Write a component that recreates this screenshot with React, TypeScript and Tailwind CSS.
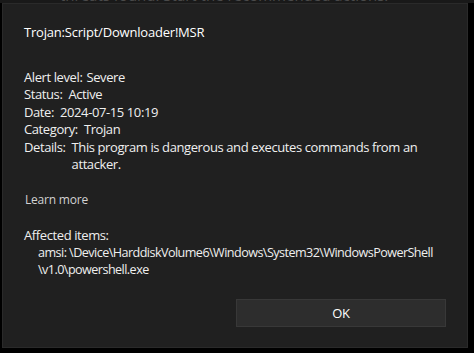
import React from "react";

const rows = [
  { label: "Alert level:", value: "Severe", gap: "ml-[4px]" },
  { label: "Status:", value: "Active", gap: "ml-[6px]" },
  { label: "Date:", value: "2024-07-15 10:19", gap: "ml-[6px]" },
  { label: "Category:", value: "Trojan", gap: "ml-[6px]" },
];

export default function App() {
  return (
    <div
      className="w-[474px] h-[353px] bg-black overflow-hidden text-[13px] text-[#efefef]"
      style={{ fontFamily: '"Open Sans", "Noto Sans", sans-serif' }}
    >
      {/* page behind the dialog, mostly hidden */}
      <div className="h-[3px] overflow-hidden bg-[#191919]">
        <div className="-mt-[13px] pl-[60px] text-[15px] leading-[16px] text-[#4a4a4a] whitespace-nowrap">
          threats found. Start the recommended actions.
        </div>
      </div>

      {/* dialog */}
      <div className="ml-[2px] w-[466px] h-[345px] bg-[#202020] border border-[#2a2a2a] flex flex-col pl-[21px] pr-[21px] pt-[19px] tracking-[-0.4px]">
        <div className="leading-[18px] text-white tracking-[-0.2px]">Trojan:Script/Downloader!MSR</div>

        <div className="mt-[28px] leading-[17.4px]">
          {rows.map((r) => (
            <div key={r.label} className="flex">
              <span>{r.label}</span>
              <span className={r.gap}>{r.value}</span>
            </div>
          ))}
          <div className="flex">
            <span className="shrink-0">Details:</span>
            <span className="ml-[6px] max-w-[365px]">
              This program is dangerous and executes commands from an attacker.
            </span>
          </div>
        </div>

        <div className="mt-[18px] ml-[1px] text-[12px] leading-[17px] text-[#d2d2d2] tracking-[-0.2px]">Learn more</div>

        <div className="mt-[19px] leading-[17px]">
          <div>Affected items:</div>
          <div className="pl-[14px] w-[430px] text-[12.6px] tracking-[-0.55px]">
            amsi: \Device\HarddiskVolume6\Windows\System32\WindowsPowerShell<wbr />\v1.0\powershell.exe
          </div>
        </div>

        <div className="flex justify-end mt-[21px]">
          <button className="w-[210px] h-[28px] bg-[#2d2d2d] border border-[#383838] text-white text-[13px] flex items-center justify-center">
            OK
          </button>
        </div>
      </div>
    </div>
  );
}
